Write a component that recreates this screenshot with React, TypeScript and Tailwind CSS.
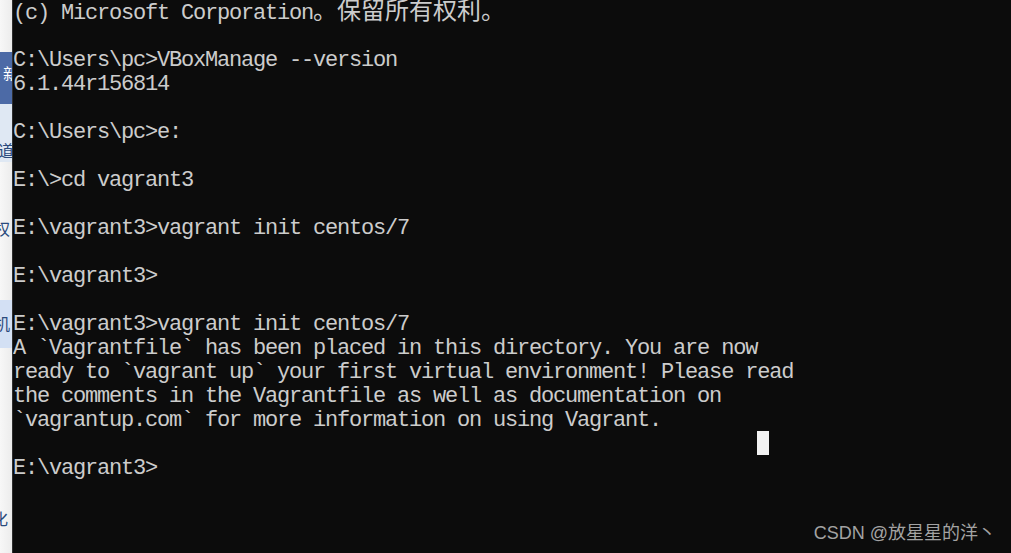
import React from 'react';

const lines: string[] = [
  '(c) Microsoft Corporation。保留所有权利。',
  '',
  'C:\\Users\\pc>VBoxManage --version',
  '6.1.44r156814',
  '',
  'C:\\Users\\pc>e:',
  '',
  'E:\\>cd vagrant3',
  '',
  'E:\\vagrant3>vagrant init centos/7',
  '',
  'E:\\vagrant3>',
  '',
  'E:\\vagrant3>vagrant init centos/7',
  'A `Vagrantfile` has been placed in this directory. You are now',
  'ready to `vagrant up` your first virtual environment! Please read',
  'the comments in the Vagrantfile as well as documentation on',
  '`vagrantup.com` for more information on using Vagrant.',
  '',
  'E:\\vagrant3>',
];

const CURSOR_ROW = 18;
const CURSOR_COL = 62;

// split a line into runs of half-width and full-width characters
function renderLine(text: string) {
  const parts = text.split(/([\u3000-\u9fff]+)/).filter(Boolean);
  return parts.map((p, i) =>
    /[\u3000-\u9fff]/.test(p) ? (
      <span key={i} className="text-[24px] tracking-normal">{p}</span>
    ) : (
      <span key={i}>{p}</span>
    )
  );
}

function SideStrip() {
  return (
    <div className="w-[12px] shrink-0 flex flex-col overflow-hidden bg-gradient-to-r from-[#f7f7f7] to-[#ececec] font-['Noto_Sans_CJK_SC',sans-serif] text-[16px] leading-none">
      <div className="h-[52px]" />
      <div className="h-[52px] bg-[#4c6aa6] text-white pl-[3px] pt-[13px] whitespace-nowrap">新</div>
      <div className="h-[58px] bg-[#dfe8f3] text-[#2a4a7c] pt-[38px] whitespace-nowrap -ml-[2px]">道</div>
      <div className="h-[138px] text-[#2a4a7c] pt-[58px] whitespace-nowrap -ml-[6px]">权</div>
      <div className="h-[48px] bg-[#d3e0f4] text-[#2a4a7c] pt-[15px] whitespace-nowrap -ml-[6px]">机</div>
      <div className="flex-1 text-[#2a4a7c] pt-[162px] whitespace-nowrap -ml-[8px]">化</div>
    </div>
  );
}

export default function App() {
  return (
    <div className="w-[1011px] h-[553px] flex overflow-hidden bg-[#0c0c0c]">
      <SideStrip />
      <div className="w-px shrink-0 bg-[#2f2f2f]" />
      <div className="relative flex-1 bg-[#0c0c0c] overflow-hidden">
        <div className="mt-px font-['Liberation_Mono','Noto_Sans_CJK_SC',monospace] text-[22px] tracking-[-1.2px] text-[#cccccc]">
          {lines.map((l, i) => (
            <div key={i} className="relative h-[24px] leading-[24px] whitespace-pre">
              {renderLine(l)}
              {i === CURSOR_ROW && (
                <span
                  className="absolute -top-[2px] h-[24px] w-[12px] bg-[#f2f2f2]"
                  style={{ left: CURSOR_COL * 12 }}
                />
              )}
            </div>
          ))}
        </div>

        {/* watermark */}
        <div className="absolute right-[15px] bottom-[8px] font-['Liberation_Sans','Noto_Sans_CJK_SC',sans-serif] text-[18px] leading-[24px] text-[#a3a3a3]">
          CSDN @放星星的洋丶
        </div>
      </div>
    </div>
  );
}
